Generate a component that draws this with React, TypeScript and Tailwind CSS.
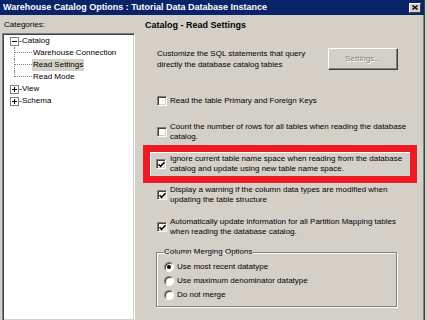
import React from 'react';

const sunken =
  'border border-t-[#808080] border-l-[#808080] border-b-white border-r-white shadow-[inset_1px_1px_0_#404040,inset_-1px_-1px_0_#d4d0c8]';

function CheckBox({ checked }: { checked?: boolean }) {
  return (
    <span className={`w-[10px] h-[10px] bg-white shrink-0 flex items-center justify-center ${sunken}`}>
      {checked && (
        <svg width="7" height="7" viewBox="0 0 7 7">
          <path d="M0.5 3.2 L2.6 5.3 L6.5 1.2" fill="none" stroke="#000" strokeWidth="1.6" />
        </svg>
      )}
    </span>
  );
}

function Radio({ checked }: { checked?: boolean }) {
  return (
    <span className="w-[10px] h-[10px] rounded-full bg-white shrink-0 flex items-center justify-center border border-t-[#808080] border-l-[#808080] border-b-white border-r-white shadow-[inset_1px_1px_0_#404040]">
      {checked && <span className="w-[4px] h-[4px] rounded-full bg-black" />}
    </span>
  );
}

function ExpandBox({ open }: { open?: boolean }) {
  return (
    <span className="relative w-[9px] h-[9px] bg-white border border-[#808080] shrink-0">
      <span className="absolute left-[1px] top-[3px] w-[5px] h-[1px] bg-black" />
      {!open && <span className="absolute left-[3px] top-[1px] w-[1px] h-[5px] bg-black" />}
    </span>
  );
}

function RootRow({ label, open }: { label: string; open?: boolean }) {
  return (
    <div className="h-[12px] flex items-center pl-[6px]">
      <ExpandBox open={open} />
      <span className="w-[2px] border-b border-dotted border-[#808080]" />
      <span className="ml-[1px]">{label}</span>
    </div>
  );
}

function ChildRow({ label, last, selected }: { label: string; last?: boolean; selected?: boolean }) {
  return (
    <div className="h-[12px] flex items-stretch pl-[10px]">
      <div className={`w-[18px] ${last ? '' : 'border-l border-dotted border-[#808080]'}`}>
        <div
          className={`h-[6px] border-b border-dotted border-[#808080] ${last ? 'border-l -ml-0' : ''}`}
        />
      </div>
      <span className={`flex items-center px-[1px] ${selected ? 'bg-[#d4d0c8]' : ''}`}>{label}</span>
    </div>
  );
}

function CheckRow({ checked, children }: { checked?: boolean; children: React.ReactNode }) {
  return (
    <div className="ml-[14px] flex items-center gap-[3px]">
      <CheckBox checked={checked} />
      <div className="whitespace-nowrap leading-[10px]">{children}</div>
    </div>
  );
}

export default function App() {
  return (
    <div
      className="w-[428px] h-[320px] bg-[#d4d0c8] overflow-hidden text-[8px] text-black"
      style={{ fontFamily: '"Liberation Sans", Arial, sans-serif' }}
    >
      <div className="w-[425px] h-full flex flex-col border-r border-r-[#404040] shadow-[inset_-1px_0_0_#808080]">
        {/* Title bar */}
        <div className="h-[15px] bg-[#0a246a] flex items-center justify-between pl-[3px] pr-[3px] shrink-0">
          <span className="text-white font-bold text-[9px] whitespace-nowrap">
            Warehouse Catalog Options : Tutorial Data Database Instance
          </span>
          <span className="w-[12px] h-[10px] bg-[#d4d0c8] flex items-center justify-center border border-t-white border-l-white border-b-[#404040] border-r-[#404040]">
            <svg width="6" height="5" viewBox="0 0 6 5">
              <path d="M0.5 0.5 L5.5 4.5 M5.5 0.5 L0.5 4.5" stroke="#000" strokeWidth="1.4" />
            </svg>
          </span>
        </div>

        <div className="flex-1 flex min-h-0">
          {/* Categories */}
          <div className="w-[135px] pl-[2px] pt-[5px] flex flex-col shrink-0">
            <div className="h-[10px] leading-[10px] pl-[2px]">Categories:</div>
            <div className={`mt-[3px] flex-1 bg-white pt-[0px] ${sunken} border-b-0`}>
              <div className="pt-[1px] pl-[1px]">
                <RootRow label="Catalog" open />
                <ChildRow label="Warehouse Connection" />
                <ChildRow label="Read Settings" selected />
                <ChildRow label="Read Mode" last />
                <RootRow label="View" />
                <RootRow label="Schema" />
              </div>
            </div>
          </div>

          {/* Settings panel */}
          <div className="w-[274px] ml-[8px] pt-[5px] flex flex-col">
            <div className="h-[10px] leading-[10px] font-bold text-[9px] pl-[2px]">Catalog - Read Settings</div>

            <div className="mt-[18px] flex items-center justify-between pl-[14px] pr-[19px]">
              <div className="leading-[11px] whitespace-nowrap">
                Customize the SQL statements that query
                <br />
                directly the database catalog tables
              </div>
              <div className="w-[70px] h-[22px] flex items-center justify-center border border-t-white border-l-white border-b-[#404040] border-r-[#404040] shadow-[inset_-1px_-1px_0_#808080] text-[#808080] [text-shadow:1px_1px_0_#ffffff]">
                Settings...
              </div>
            </div>

            <div className="mt-[26px]">
              <CheckRow>Read the table Primary and Foreign Keys</CheckRow>
            </div>

            <div className="mt-[16px]">
              <CheckRow>
                Count the number of rows for all tables when reading the database
                <br />
                catalog.
              </CheckRow>
            </div>

            <div className="mt-[3px] border-[7px] border-[#ed1c24] shadow-[inset_1px_1px_0_#ffffff] py-[2px] pl-[6px] flex items-center gap-[4px]">
              <CheckBox checked />
              <div className="whitespace-nowrap leading-[10px]">
                Ignore current table name space when reading from the database
                <br />
                catalog and update using new table name space.
              </div>
            </div>

            <div className="mt-[2px]">
              <CheckRow checked>
                Display a warning if the column data types are modified when
                <br />
                updating the table structure
              </CheckRow>
            </div>

            <div className="mt-[12px]">
              <CheckRow checked>
                Automatically update information for all Partition Mapping tables
                <br />
                when reading the database catalog.
              </CheckRow>
            </div>

            <fieldset className="mt-[10px] ml-[13px] w-[241px] border border-[#808080] shadow-[1px_1px_0_#ffffff,inset_1px_1px_0_#ffffff] pl-[7px] pt-[3px] pb-[4px]">
              <legend className="ml-[-1px] px-[1px] leading-[10px]">Column Merging Options</legend>
              <div className="h-[14px] flex items-center gap-[3px]">
                <Radio checked />
                <span>Use most recent datatype</span>
              </div>
              <div className="h-[14px] flex items-center gap-[3px]">
                <Radio />
                <span>Use maximum denominator datatype</span>
              </div>
              <div className="h-[14px] flex items-center gap-[3px]">
                <Radio />
                <span>Do not merge</span>
              </div>
            </fieldset>
          </div>
        </div>
      </div>
    </div>
  );
}
